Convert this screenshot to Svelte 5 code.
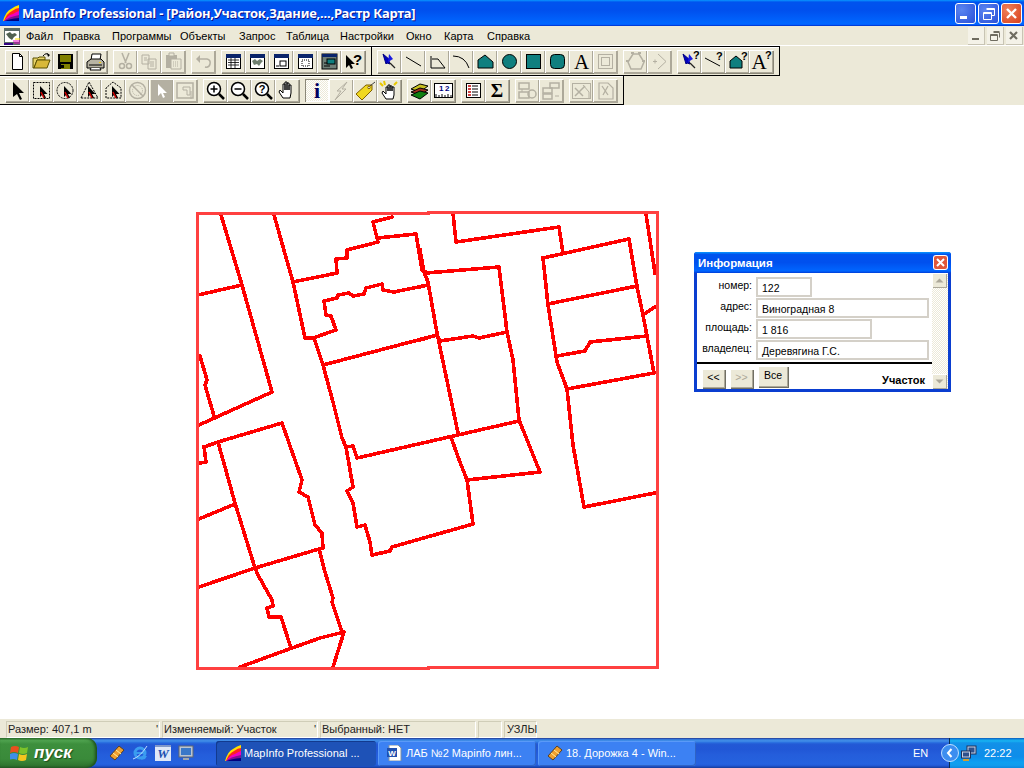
<script>
  const menu = [['Файл',37],['Правка',49],['Программы',68],['Объекты',59],['Запрос',47],['Таблица',54],['Настройки',66],['Окно',38],['Карта',43],['Справка',50]];

  const G = '#b4b0a2';
  const win = (inner) => `<rect x="5.5" y="4.5" width="14" height="14" fill="#fff" stroke="#000"/><rect x="5" y="4" width="15" height="4" fill="#0a246a"/>${inner}`;
  const select = (inner) => `${inner}<path d="M11 7v11l2.500-2.500 2 4 1.500-.8-2-3.700h3.500z" fill="#000"/><path d="M12 13l3 6" stroke="#d00000" stroke-width="1.500"/>`;
  const teal = '#0f7f7f';
  const pin = `<path d="M6 4l7 6-1 1 1 3-3-1-1 1z" fill="#0000c0" stroke="#000080"/><path d="M12 4l4 5-5 3z" fill="#1a1ae0"/><path d="M13 13l5 5" stroke="#222" stroke-width="1.300"/>`;
  const q = (x=16,y=9) => `<text x="${x}" y="${y}" font-family="Liberation Sans" font-size="11" font-weight="700" fill="#000">?</text>`;

  const icons = {
    nw: `<path d="M7.500 3.500h7l3 3v13h-10z" fill="#fff" stroke="#000"/><path d="M14.500 3.500v3h3" fill="none" stroke="#000"/>`,
    open: `<path d="M4 8h5l1-1h6v3H8l-3 8H4z" fill="#e8d468" stroke="#5a5000"/><path d="M5 18l3-8h13l-3 8z" fill="#d8b838" stroke="#5a5000"/><path d="M14 6q3-4 6-1" fill="none" stroke="#000"/><path d="M18 3l3 2-2 2z" fill="#000"/>`,
    save: `<rect x="5" y="4" width="15" height="15" fill="#000"/><rect x="7" y="5" width="11" height="7" fill="#808000"/><rect x="8" y="14" width="9" height="5" fill="#808000"/><rect x="8" y="15" width="3" height="3" fill="#000"/>`,
    print: `<path d="M9 4h9l-1 6H8z" fill="#fff" stroke="#000"/><path d="M4 12l4-3h10l3 3v6H4z" fill="#b8b4a4" stroke="#000"/><path d="M6 15h13M8 18l-1 2h11l-1-2" fill="#fff" stroke="#000"/><rect x="16" y="12" width="2" height="1" fill="#f0d000"/>`,
    cut: `<path d="M9 3l4 10M16 3l-4 10" stroke="${G}" stroke-width="1.500" fill="none"/><circle cx="9" cy="16" r="2.500" fill="none" stroke="${G}" stroke-width="1.500"/><circle cx="16" cy="16" r="2.500" fill="none" stroke="${G}" stroke-width="1.500"/>`,
    copy: `<path d="M5 5h7v9H5zM11 9h8v10h-8z" fill="#ece9d8" stroke="${G}"/><path d="M7 8h3M7 10h3M13 12h4M13 14h4M13 16h4" stroke="${G}"/>`,
    paste: `<path d="M5 5h11v13H5z" fill="${G}"/><path d="M8 3h5v3H8z" fill="#ece9d8" stroke="${G}"/><path d="M10 9h10v10H10z" fill="#ece9d8" stroke="${G}"/><path d="M12 12h6M12 14h6M12 16h6" stroke="${G}" stroke-dasharray="1 1"/>`,
    undo: `<path d="M8 9h8q4 1 3 5t-5 3" fill="none" stroke="${G}" stroke-width="1.500"/><path d="M9 5v8l-4-4z" fill="${G}"/>`,
    browse: win(`<path d="M7 10h11M7 12.500h11M7 15h11M10 8v10M14 8v10" stroke="#000" stroke-width=".8"/>`),
    mapw: win(`<path d="M7 11l3-2 2 2 3-2 3 2-2 2-2 3-2-2-3 1z" fill="#708070"/>`),
    layout: win(`<rect x="11" y="11" width="6" height="5" fill="#fff" stroke="#000"/><path d="M7 16h3" stroke="#000"/>`),
    graph: win(`<rect x="9" y="10" width="7" height="6" fill="#fff" stroke="#000" stroke-dasharray="1 1"/>`),
    redist: `<rect x="5" y="4" width="15" height="15" fill="#6f7f78" stroke="#000"/><rect x="5" y="4" width="15" height="3" fill="#0a246a"/><rect x="10" y="9" width="8" height="5" fill="${teal}" stroke="#000"/><path d="M7 13h3M7 16h6" stroke="#000"/>`,
    help: `<path d="M5 5v13l3-3 2 4 2-1-2-4h4z" fill="#000"/>${q(12,15).replace('font-size="11"','font-size="15"')}`,
    pin,
    line: `<path d="M5 7l15 9" stroke="#000" fill="none"/>`,
    poly: `<path d="M6 6v12h14l-7-9H7" stroke="#000" fill="none"/>`,
    arc: `<path d="M4 6q12 0 16 12" stroke="#000" fill="none"/>`,
    pgon: `<path d="M5 10l7-5 8 7v6H5z" fill="${teal}" stroke="#000"/>`,
    ell: `<circle cx="12.500" cy="11.500" r="7" fill="${teal}" stroke="#000"/>`,
    rect: `<rect x="5.500" y="4.500" width="14" height="14" fill="${teal}" stroke="#000"/>`,
    rrect: `<rect x="5.500" y="4.500" width="14" height="14" rx="4" fill="${teal}" stroke="#000"/>`,
    A: `<text x="12.500" y="19" text-anchor="middle" font-family="Liberation Serif" font-size="21" fill="#000">A</text>`,
    frame: `<rect x="5.500" y="4.500" width="14" height="14" fill="#ece9d8" stroke="${G}"/><rect x="8.500" y="7.500" width="8" height="8" fill="#ece9d8" stroke="${G}"/>`,
    gpoly: `<path d="M5 12l5-8h6l5 8-3 7H8z" fill="none" stroke="${G}" stroke-width="1.500"/><path d="M8 3h3M15 3h3M3 11h3M19 11h3" stroke="${G}" stroke-width="2"/>`,
    gplus: `<path d="M6 11.500h4M8 9.500v4M11 4l8 7.500-8 7.500" fill="none" stroke="${G}"/>`,
    pinq: pin + q(16,9),
    lineq: `<path d="M4 8l15 8" stroke="#000" fill="none"/>${q(15,10)}`,
    pgonq: `<path d="M5 11l6-5 6 5v7H5z" fill="${teal}" stroke="#000"/>${q(16,10)}`,
    Aq: `<text x="10" y="19" text-anchor="middle" font-family="Liberation Serif" font-size="21" fill="#000">A</text>${q(16,9)}`,

    arrow: `<path d="M8 3v15l4-3 3 6 2-1-3-6h5z" fill="#000"/>`,
    marq: select(`<rect x="4.500" y="3.500" width="16" height="16" fill="none" stroke="#000" stroke-dasharray="2 1"/>`),
    rad: select(`<circle cx="12" cy="11.500" r="8" fill="none" stroke="#000" stroke-dasharray="2 1"/>`),
    bnd: select(`<path d="M4 19l8-16 9 16z" fill="none" stroke="#000" stroke-dasharray="2 1"/>`),
    pbnd: select(`<path d="M5 19V9l7-6 8 6v10z" fill="none" stroke="#000" stroke-dasharray="2 1"/>`),
    nosel: `<circle cx="12.500" cy="11.500" r="8" fill="none" stroke="${G}" stroke-width="1.500"/><circle cx="12.500" cy="11.500" r="5" fill="none" stroke="${G}" stroke-dasharray="1 1"/><path d="M7 6l11 11" stroke="${G}" stroke-width="1.500"/>`,
    garrow: `<rect x="2" y="1" width="21" height="21" fill="#b4b0a2"/><path d="M9 5v12l3-3 2 5 2-1-2-4h4z" fill="#fff"/>`,
    glay: `<rect x="4" y="4" width="16" height="15" fill="none" stroke="${G}" stroke-width="1.500"/><path d="M10 8h7v8h-3v-5h-4z" fill="none" stroke="${G}"/><path d="M18 12v8" stroke="${G}"/>`,
    zin: `<circle cx="11" cy="10" r="6.500" fill="#fff" stroke="#000" stroke-width="1.500"/><path d="M7.500 10h7M11 6.500v7" stroke="#000" stroke-width="1.500"/><path d="M16 15l5 5" stroke="#000" stroke-width="2.500"/>`,
    zout: `<circle cx="11" cy="10" r="6.500" fill="#fff" stroke="#000" stroke-width="1.500"/><path d="M7.500 10h7" stroke="#000" stroke-width="1.500"/><path d="M16 15l5 5" stroke="#000" stroke-width="2.500"/>`,
    zq: `<circle cx="11" cy="10" r="6.500" fill="#fff" stroke="#000" stroke-width="1.500"/><text x="11" y="14" text-anchor="middle" font-family="Liberation Sans" font-size="11" font-weight="700">?</text><path d="M16 15l5 5" stroke="#000" stroke-width="2.500"/>`,
    hand: `<path d="M8 19l-4-6 1-2 3 3V5h2v6V3h2v8V4h2v7V6h2v8l-1 5z" fill="#fff" stroke="#000" stroke-linejoin="round"/>`,
    info: `<text x="12" y="19" text-anchor="middle" font-family="Liberation Serif" font-size="22" font-weight="700" fill="#000060">i</text>`,
    bolt: `<path d="M18 3L8 12h4l-6 9 11-11h-4z" fill="#ece9d8" stroke="${G}"/>`,
    tag: `<path d="M3 15L13 6h6v5L9 21z" fill="#f0d820" stroke="#806000"/><circle cx="16" cy="8.500" r="1.200" fill="#fff" stroke="#806000"/><path d="M17 7l5-4" stroke="#404040"/>`,
    dhand: `<path d="M9 20l-4-6 1-2 3 3 0-7h2v4-6h2v6-5h2v5-4h2v8l-1 4z" fill="#fff" stroke="#000"/><path d="M3 4l3 3M7 2l1 4M20 3l-3 3" stroke="#e8c800" stroke-width="2"/>`,
    layers: `<path d="M4 10l9-5 8 2-8 6z" fill="#c8c020" stroke="#000"/><path d="M4 13l9-4 8 2-8 5z" fill="#a03020" stroke="#000"/><path d="M4 16l9-4 8 2-8 6z" fill="#108010" stroke="#000"/>`,
    ruler: `<rect x="3.500" y="4.500" width="18" height="14" fill="#fff" stroke="#000"/><text x="8" y="12" font-family="Liberation Sans" font-size="8" font-weight="700" fill="#000080">1</text><text x="14" y="12" font-family="Liberation Sans" font-size="8" font-weight="700" fill="#000080">2</text><path d="M5 18v-3M8 18v-2M11 18v-3M14 18v-2M17 18v-3M20 18v-2" stroke="#000"/>`,
    legend: `<rect x="5.500" y="4.500" width="14" height="14" fill="#fff" stroke="#000"/><path d="M7 7h3M7 10h3M7 13h3M7 16h3" stroke="#c00000" stroke-width="1.500"/><path d="M11 7h6M11 10h6M11 13h6M11 16h6" stroke="#000"/>`,
    sigma: `<text x="12" y="18" text-anchor="middle" font-family="Liberation Serif" font-size="19" font-weight="700" fill="#000">Σ</text>`,
    gnodes: `<rect x="4" y="4" width="10" height="6" fill="none" stroke="${G}" stroke-width="1.500"/><rect x="4" y="13" width="10" height="6" fill="none" stroke="${G}" stroke-width="1.500"/><circle cx="17" cy="15" r="4" fill="none" stroke="${G}" stroke-width="1.500"/><path d="M7 10v3" stroke="${G}"/>`,
    gboxes: `<rect x="4" y="9" width="9" height="5" fill="none" stroke="${G}" stroke-width="1.500"/><rect x="11" y="4" width="9" height="5" fill="none" stroke="${G}" stroke-width="1.500"/><rect x="4" y="15" width="9" height="5" fill="none" stroke="${G}" stroke-width="1.500"/><path d="M16 17h4" stroke="${G}"/>`,
    gcut: `<rect x="3.500" y="4.500" width="18" height="15" fill="none" stroke="${G}"/><path d="M6 17l10-10M6 9l8 8" stroke="${G}" stroke-width="1.500"/><path d="M14 6l6 7v6" fill="none" stroke="${G}"/>`,
    gscis: `<path d="M6 4h9l5 5v11H6z" fill="none" stroke="${G}" stroke-width="1.200"/><path d="M9 7l6 9M15 7l-5 9" stroke="${G}" stroke-width="1.300"/>`
  };

  const row1 = [
    [['nw'],['open'],['save']],
    [['print']],
    [['cut',1],['copy',1],['paste',1]],
    [['undo',1]],
    [['browse'],['mapw'],['layout'],['graph'],['redist'],['help']],
    'sep',
    [['pin'],['line'],['poly'],['arc'],['pgon'],['ell'],['rect'],['rrect'],['A'],['frame',1]],
    [['gpoly',1],['gplus',1]],
    [['pinq'],['lineq'],['pgonq'],['Aq']]
  ];
  const row2 = [
    [['arrow'],['marq'],['rad'],['bnd'],['pbnd'],['nosel',1],['garrow',1],['glay',1]],
    [['zin'],['zout'],['zq'],['hand']],
    [['info',0,1],['bolt',1],['tag'],['dhand']],
    [['layers'],['ruler']],
    [['legend'],['sigma']],
    [['gnodes',1],['gboxes',1]],
    [['gcut',1],['gscis',1]]
  ];

  const lines = [
    '221,215 242,285 272,392 199,425',
    '198,295 242,285',
    '200,356 207,380 205,385 214,416',
    '274,215 293,282 305,338 313,338 336,330 331,316 326,315 324,301 337,298 338,295 349,293 353,296 364,294 366,288 382,284 383,290 394,292 428,285',
    '293,282 337,273 336,259 347,258 347,250 378,242 373,222 392,217',
    '378,238 416,234 422,270 428,273',
    '420,250 424,272 428,282 437,333 458,433',
    '426,273 499,267 507,332 513,360 519,420 540,472 467,480',
    '420,340 437,335 440,341 473,336 479,338 507,332',
    '420,287 427,285',
    '323,365 437,335',
    '449,437 519,421',
    '314,338 323,365 333,402 342,438 346,447 353,487 347,491 353,503 357,527 365,525 370,542 372,555 390,551 392,547 473,524 467,480 458,457 451,437',
    '346,447 353,446 357,458 449,437',
    '204,447 218,442 282,423 302,480 299,492 308,497 315,525 322,533 323,548 319,549',
    '200,463 206,462 204,447',
    '218,442 235,503 255,568 258,575 272,600 273,606 267,608 269,617 281,617 291,648',
    '199,519 235,504',
    '199,587 255,568 319,549',
    '319,549 325,572 333,598 332,602 342,632 344,632 333,667',
    '240,667 292,648 320,638 344,632',
    '453,213 456,242 559,227 563,253',
    '543,258 629,239 637,287 643,315 654,373 567,389 557,362 548,305 543,258',
    '548,304 637,286',
    '557,356 585,351 590,342 647,336',
    '643,315 655,307',
    '646,214 655,273',
    '567,389 573,445 584,507 655,493'
  ];

  const fields = [
    { label: 'номер:', value: '122', w: 56 },
    { label: 'адрес:', value: 'Виноградная 8', w: 173 },
    { label: 'площадь:', value: '1 816', w: 116 },
    { label: 'владелец:', value: 'Деревягина Г.С.', w: 173 }
  ];
</script>

{#snippet logo(size)}
  <svg class="logo" width={size} height={size} viewBox="0 0 16 16">
    <path d="M0 16Q3 6 8 4Q12 1 16 0V16z" fill="#ffe000"/>
    <path d="M1 16Q4 8 9 6Q13 3 16 3V16z" fill="#ff2020"/>
    <path d="M1 16Q5 10 10 9Q13 7 16 6V16z" fill="#f000c0"/>
    <path d="M1 16Q5 12 16 10V16z" fill="#801090"/>
    <path d="M2 16Q6 14 16 13V16z" fill="#000080"/>
  </svg>
{/snippet}

{#snippet winamp()}
  <svg width="16" height="16" viewBox="0 0 16 16"><path d="M1 11L10 1l5 4-9 10z" fill="#f0a030" stroke="#5a4020"/><path d="M4 8l5 4M7 5l5 4" stroke="#fff0a0"/></svg>
{/snippet}

{#snippet toolbar(groups)}
  {#each groups as g}
    {#if g === 'sep'}
      <div class="sep"></div>
    {:else}
      <div class="group">
        {#each g as [name, disabled, pressed]}
          <div class="btn" class:pressed class:off={disabled}>
            <svg width="24" height="23" viewBox="0 0 24 23">{@html icons[name]}</svg>
          </div>
        {/each}
      </div>
    {/if}
  {/each}
{/snippet}

<div class="screen">
  <header class="title">
    {@render logo(16)}
    <span class="title-text">MapInfo Professional - [Район,Участок,Здание,...,Растр Карта]</span>
    <div class="wbtns">
      <div class="wbtn"><svg width="19" height="19" viewBox="0 0 19 19"><rect x="4" y="12" width="7" height="3" fill="#fff"/></svg></div>
      <div class="wbtn"><svg width="19" height="19" viewBox="0 0 19 19"><path d="M7.500 4.500h8v7h-3M4.500 8.500h8v7h-8zM4.500 9.500h8M7.500 5.500h8" fill="none" stroke="#fff"/></svg></div>
      <div class="wbtn close"><svg width="19" height="19" viewBox="0 0 19 19"><path d="M5 5l9 9M14 5l-9 9" stroke="#fff" stroke-width="2.400"/></svg></div>
    </div>
  </header>

  <nav class="menubar">
    <svg class="mdi" width="16" height="17" viewBox="0 0 16 17">
      <rect width="16" height="17" fill="#5a6a68"/>
      <rect x="1" y="3" width="14" height="11" fill="#fff"/>
      <path d="M2 6l4-2 2 2 3-1 2 2-3 2-2 3-3-2z" fill="#506050"/>
      <path d="M9 13h7M10 15h6" stroke="#e000c0"/>
      <path d="M11 11h5" stroke="#ffe000"/>
      <rect y="15" width="9" height="2" fill="#300080"/>
    </svg>
    {#each menu as [m, w]}<span class="mi" style="width:{w}px">{m}</span>{/each}
    <div class="mdi-btns">
      <div class="cbtn"><svg width="16" height="17" viewBox="0 0 16 17"><rect x="4" y="11" width="7" height="2" fill="#6f6c60"/></svg></div>
      <div class="cbtn"><svg width="16" height="17" viewBox="0 0 16 17"><path d="M6.500 5.500h6v5M3.500 7.500h7v6h-7zM6.500 4.500h6M3.500 8.500h7" fill="none" stroke="#6f6c60"/></svg></div>
      <div class="cbtn"><svg width="16" height="17" viewBox="0 0 16 17"><path d="M4 5l7 7M11 5l-7 7" stroke="#6f6c60" stroke-width="2.200"/></svg></div>
    </div>
  </nav>

  <div class="toolbars">
    <div class="row row1">{@render toolbar(row1)}</div>
    <div class="row row2">{@render toolbar(row2)}</div>
  </div>

  <main class="map">
    <svg class="canvas" width="1024" height="614" viewBox="0 105 1024 614" shape-rendering="crispEdges">
      {#each lines as pts}
        <polyline points={pts} class="parcel" />
      {/each}
      <path class="frame" d="M197 213H428V212H657V667H428V668H197Z" />
    </svg>

    <section class="info">
      <div class="info-title">
        <span>Информация</span>
        <div class="info-close"><svg width="13" height="13" viewBox="0 0 13 13"><path d="M3 3l7 7M10 3l-7 7" stroke="#fff" stroke-width="2"/></svg></div>
      </div>
      <div class="info-body">
        <div class="info-main">
          <div class="rows">
            {#each fields as f}
              <div class="frow">
                <span class="lab">{f.label}</span>
                <div class="val" style="width:{f.w}px">{f.value}</div>
              </div>
            {/each}
          </div>
          <div class="info-foot">
            <div class="fbtn small">&lt;&lt;</div>
            <div class="fbtn small dis">&gt;&gt;</div>
            <div class="fbtn wide">Все</div>
            <b class="kind">Участок</b>
          </div>
        </div>
        <div class="scroll">
          <div class="sbtn"><svg width="15" height="15" viewBox="0 0 15 15"><path d="M3.500 9.500L7.500 5.500 11.500 9.500z" fill="#aca899"/></svg></div>
          <div class="sbtn"><svg width="15" height="15" viewBox="0 0 15 15"><path d="M3.500 5.500L7.500 9.500 11.500 5.500z" fill="#aca899"/></svg></div>
        </div>
      </div>
    </section>
  </main>

  <footer class="status">
    <div class="sf s1">Размер: 407,1 m<i>'</i></div>
    <div class="sf s2">Изменяемый: Участок<i>'</i></div>
    <div class="sf s3">Выбранный: НЕТ</div>
    <div class="sf s4"></div>
    <div class="sf s5">УЗЛЫ</div>
  </footer>

  <div class="taskbar">
    <div class="start">
      <svg width="19" height="18" viewBox="0 0 19 18">
        <path d="M1 3q4-2 8 0l-1 6q-4-2-8 0z" fill="#e8501e"/>
        <path d="M10 3q4 2 8 0l-1 6q-4 2-8 0z" fill="#7cc22a"/>
        <path d="M0 10q4-2 8 0l-1 6q-4-2-8 0z" fill="#3f8ee8"/>
        <path d="M9 10q4 2 8 0l-1 6q-4 2-8 0z" fill="#f4c51e"/>
      </svg>
      <span>пуск</span>
    </div>
    <div class="quick">
      {@render winamp()}
      <svg width="16" height="16" viewBox="0 0 16 16"><circle cx="8" cy="8" r="5" fill="none" stroke="#3a9cf0" stroke-width="3"/><path d="M4 8h8" stroke="#3a9cf0" stroke-width="2"/><path d="M11 11h4l-2 3-4 1z" fill="#3a9cf0"/><path d="M1 14Q8 12 15 1" fill="none" stroke="#bfe0ff"/></svg>
      <svg width="16" height="16" viewBox="0 0 16 16"><rect width="16" height="16" fill="#dfe8f8"/><path d="M0 0h16v2H0z" fill="#8098c8"/><text x="8" y="13" text-anchor="middle" font-family="Liberation Serif" font-size="13" font-weight="700" font-style="italic" fill="#2050b0">W</text></svg>
      <svg width="16" height="16" viewBox="0 0 16 16"><rect x="1" y="1" width="14" height="11" fill="#b8c4d4" stroke="#606870"/><rect x="3" y="3" width="10" height="7" fill="#3a78c8"/><rect x="5" y="13" width="6" height="2" fill="#a0a8b0"/></svg>
    </div>
    <div class="tasks">
      <div class="task active">{@render logo(16)}<span>MapInfo Professional ...</span></div>
      <div class="task">
        <svg width="16" height="16" viewBox="0 0 16 16"><path d="M2 0h9l3 3v13H2z" fill="#fff" stroke="#8090a0"/><rect x="0" y="3" width="10" height="9" fill="#2050b0"/><text x="5" y="11" text-anchor="middle" font-family="Liberation Sans" font-size="8" font-weight="700" fill="#fff">W</text></svg>
        <span>ЛАБ №2 Mapinfo лин...</span>
      </div>
      <div class="task">
        {@render winamp()}
        <span>18. Дорожка 4 - Win...</span>
      </div>
    </div>
    <span class="lang">EN</span>
    <div class="tray">
      <div class="chev"><svg width="18" height="18" viewBox="0 0 18 18"><circle cx="9" cy="9" r="8.500" fill="#3c8ef0" stroke="#bfe0ff"/><path d="M10.500 5L7 9l3.500 4" fill="none" stroke="#fff" stroke-width="2"/></svg></div>
      <svg class="net" width="16" height="16" viewBox="0 0 16 16"><rect x="6" y="1" width="9" height="8" fill="#c8d4e8" stroke="#20305a"/><rect x="7.500" y="2.500" width="6" height="5" fill="#30508a"/><rect x="0.500" y="6" width="9" height="7" fill="#c8d4e8" stroke="#20305a"/><rect x="2" y="7.500" width="6" height="4" fill="#30508a"/><rect x="2" y="14" width="6" height="2" fill="#d0a030"/></svg>
      <span class="clock">22:22</span>
    </div>
  </div>
</div>

<style>
  :global(body) { margin: 0; background: #fff; }
  .screen {
    width: 1024px; height: 768px; overflow: hidden; display: flex; flex-direction: column;
    font: 11px "Liberation Sans", Arial, sans-serif; color: #000; background: #ece9d8;
  }
  .title {
    height: 26px; flex: none; display: flex; align-items: center; padding: 0 2px 0 3px; box-sizing: border-box;
    background: linear-gradient(180deg, #0997ff 0, #0053ee 8%, #0050ee 40%, #0066ff 88%, #0066ff 93%, #005bff 95%, #003dd7 96%, #003dd7 100%);
  }
  .title-text {
    margin-left: 3px; color: #fff; font: bold 13px "Noto Sans", "Open Sans", sans-serif; white-space: nowrap;
    text-shadow: 1px 1px 0 #0f1089; letter-spacing: -.2px;
  }
  .wbtns { margin-left: auto; display: flex; gap: 2px; }
  .wbtn {
    width: 21px; height: 21px; box-sizing: border-box; border: 1px solid #fff; border-radius: 3px;
    background: radial-gradient(circle at 30% 30%, #5a85f0, #2a50d8);
  }
  .wbtn.close { background: radial-gradient(circle at 30% 30%, #f0805a, #d8401c); }
  .wbtn svg { display: block; }

  .menubar { height: 20px; flex: none; display: flex; align-items: center; padding-left: 4px; box-shadow: inset 0 -1px 0 #fff; }
  .mdi { margin-right: 6px; }
  .mi { white-space: nowrap; flex: none; }
  .mdi-btns { margin-left: auto; margin-right: 1px; display: flex; gap: 2px; }
  .cbtn {
    width: 16px; height: 17px; background: #f4f2e8; border-right: 1px solid #c8c4b4; border-bottom: 1px solid #c8c4b4;
  }
  .cbtn svg { display: block; }

  .toolbars { height: 59px; flex: none; background: #ece9d8; }
  .row { display: flex; box-sizing: border-box; gap: 6px; padding-left: 5px; align-items: flex-start; }
  .row1 { width: 780px; height: 30px; padding-top: 3px; border: solid #000; border-width: 1px 1px 1px 0; box-shadow: inset 0 1px 0 #fff; }
  .row2 { width: 624px; height: 29px; padding-top: 3px; border: solid #000; border-width: 0 1px 1px 0; box-shadow: inset 0 1px 0 #fff; }
  .group { display: flex; }
  .sep { width: 1px; height: 28px; margin: -3px -1px 0 0; background: #000; }
  .btn {
    width: 24px; height: 23px; box-sizing: border-box; position: relative; overflow: hidden;
    background: #ece9d8;
    box-shadow: inset 1px 1px 0 #fff, inset -1px -1px 0 #aca899, 1px 1px 0 #8a8778;
  }
  .btn svg { display: block; }
  .btn.pressed {
    box-shadow: inset 1px 1px 0 #8a8778, inset -1px -1px 0 #fff;
    background: repeating-conic-gradient(#fff 0 25%, #ece9d8 0 50%) 0 0 / 2px 2px;
  }
  .btn.off { box-shadow: inset 1px 1px 0 #fff, inset -1px -1px 0 #aca899, 1px 1px 0 #aca899; }

  .map { flex: 1; background: #fff; position: relative; }
  .canvas { position: absolute; left: 0; top: 0; display: block; }
  .parcel { fill: none; stroke: #ff0000; stroke-width: 3.600; stroke-linejoin: round; stroke-linecap: square; }
  .frame { fill: none; stroke: #ff4040; stroke-width: 3; }

  .info {
    position: absolute; left: 694px; top: 147px; width: 257px; height: 140px; box-sizing: border-box;
    border: 3px solid #0a3ed0; border-top: 0; border-radius: 3px 3px 0 0; display: flex; flex-direction: column; background: #fff;
  }
  .info-title {
    height: 21px; margin: 0 -3px; padding: 0 4px 0 4px; flex: none; display: flex; align-items: center; justify-content: space-between;
    color: #fff; font: bold 11.500px "Liberation Sans", sans-serif; border-radius: 3px 3px 0 0;
    background: linear-gradient(180deg, #0997ff 0, #0053ee 12%, #0050ee 50%, #0066ff 90%, #003dd7 100%);
  }
  .info-close { width: 13px; height: 13px; border-radius: 2px; box-shadow: 0 0 0 1px #fff; background: #e0583a; }
  .info-close svg { display: block; }
  .info-body { flex: 1; display: flex; min-height: 0; }
  .info-main { width: 235px; display: flex; flex-direction: column; }
  .rows { display: flex; flex-direction: column; gap: 1px; padding: 4px 0 2px; height: 91px; box-sizing: border-box; border-bottom: 2px solid #000; flex: none; }
  .frow { display: flex; gap: 4px; align-items: flex-start; height: 20px; }
  .lab { width: 55px; text-align: right; font-size: 10.500px; white-space: nowrap; line-height: 16px; flex: none; }
  .val { height: 20px; box-sizing: border-box; border: 2px solid #d4d0c8; padding: 0 4px; line-height: 18px; font-size: 10.500px; white-space: nowrap; }
  .info-foot { flex: 1; display: flex; align-items: center; padding: 0 0 0 5px; position: relative; }
  .fbtn {
    height: 19px; box-sizing: border-box; text-align: center; line-height: 17px; font-size: 10.500px; background: #ece9d8;
    box-shadow: inset 1px 1px 0 #fff, inset -1px -1px 0 #aca899, 1px 1px 0 #716f64;
  }
  .small { width: 23px; margin-right: 5px; margin-top: 3px; }
  .wide { width: 30px; height: 21px; line-height: 19px; margin-top: -1px; }
  .dis { color: #aca899; }
  .kind { margin-left: auto; margin-right: 7px; margin-top: 6px; font-size: 11px; }
  .scroll {
    width: 16px; display: flex; flex-direction: column; justify-content: space-between;
    background: repeating-conic-gradient(#fff 0 25%, #ece9d8 0 50%) 0 0 / 2px 2px;
  }
  .sbtn { width: 15px; height: 15px; background: #ece9d8; box-shadow: inset 1px 1px 0 #fff, inset -1px -1px 0 #aca899; }
  .sbtn svg { display: block; }

  .status { height: 19px; flex: none; display: flex; padding: 2px 0 0 6px; box-sizing: border-box; gap: 2px; background: #ece9d8; }
  .sf {
    height: 17px; box-sizing: border-box; padding-left: 1px; line-height: 15px; white-space: nowrap; position: relative;
    border: 1px solid; border-color: #d0cdb8 #fff #fff #d0cdb8; color: #222;
  }
  .sf i { position: absolute; right: 1px; top: 0; font-style: normal; }
  .s1 { width: 154px; } .s2 { width: 156px; } .s3 { width: 156px; } .s4 { width: 24px; } .s5 { width: 33px; padding-left: 2px; }

  .taskbar {
    height: 30px; flex: none; display: flex; align-items: stretch; position: relative;
    background: linear-gradient(180deg, #1f2f86 0, #3165c4 3%, #3682e5 6%, #4490e6 10%, #3883e5 12%, #2b71e0 15%, #2663da 18%, #235bd6 20%, #2258d5 23%, #2157d6 38%, #245ddb 54%, #2562df 86%, #245fdc 89%, #2158d4 92%, #1d4ec0 95%, #1941a5 98%);
  }
  .start {
    width: 97px; padding: 0 0 0 10px; box-sizing: border-box; display: flex; align-items: center; gap: 5px; border-radius: 0 10px 10px 0;
    background: linear-gradient(180deg, #388238 0, #4fa34f 8%, #3d8f3d 20%, #3a8a3a 70%, #2f752f 92%, #295f29 100%);
    box-shadow: inset -2px 0 3px #1c4e1c;
  }
  .start span { color: #fff; font: italic bold 17px "Liberation Sans", sans-serif; text-shadow: 1px 1px 1px #1c4e1c; }
  .quick { width: 119px; box-sizing: border-box; display: flex; align-items: center; gap: 7px; padding-left: 12px; flex: none; }
  .tasks { display: flex; gap: 2px; align-items: center; }
  .task {
    width: 158px; height: 25px; box-sizing: border-box; display: flex; align-items: center; gap: 3px; padding-left: 9px;
    background: #3c81f3; border-radius: 3px; color: #fff; white-space: nowrap; box-shadow: inset 1px 1px 0 #5a9af8, inset -1px -1px 0 #2f63c4;
  }
  .task.active { background: #1e52b7; box-shadow: inset 1px 1px 0 #123a8e; width: 160px; }
  .lang { position: absolute; left: 913px; top: 9px; color: #fff; }
  .tray {
    margin-left: auto; width: 75px; display: flex; align-items: center; position: relative; padding-left: 11px; box-sizing: border-box;
    background: linear-gradient(180deg, #0c59b9 0, #139ee9 6%, #18b5f2 10%, #139beb 14%, #1290e8 19%, #0d8dea 63%, #0d9ff1 81%, #0f9eed 88%, #119bee 91%, #0b89dd 100%);
    border-left: 1px solid #092e51; color: #fff;
  }
  .chev { position: absolute; left: -9px; top: 6px; }
  .chev svg { display: block; }
  .clock { margin-left: 7px; }
</style>
